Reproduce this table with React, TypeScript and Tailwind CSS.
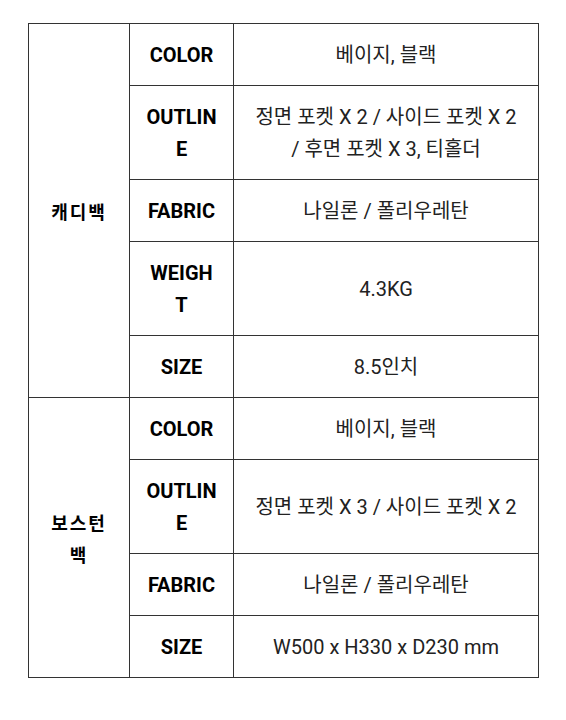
import React from 'react';

type Row = { label: string; value: string };

// labels carry the same breaks the narrow column shows
const groups: { name: string; rows: Row[] }[] = [
  {
    name: '캐디백',
    rows: [
      { label: 'COLOR', value: '베이지, 블랙' },
      { label: 'OUTLIN\nE', value: '정면 포켓 X 2 / 사이드 포켓 X 2 / 후면 포켓 X 3, 티홀더' },
      { label: 'FABRIC', value: '나일론 / 폴리우레탄' },
      { label: 'WEIGH\nT', value: '4.3KG' },
      { label: 'SIZE', value: '8.5인치' },
    ],
  },
  {
    name: '보스턴 백',
    rows: [
      { label: 'COLOR', value: '베이지, 블랙' },
      { label: 'OUTLIN\nE', value: '정면 포켓 X 3 / 사이드 포켓 X 2' },
      { label: 'FABRIC', value: '나일론 / 폴리우레탄' },
      { label: 'SIZE', value: 'W500 x H330 x D230 mm' },
    ],
  },
];

const cell = 'border border-[#333] text-center align-middle py-[14.5px] leading-[32px]';

export default function App() {
  return (
    <div
      className="bg-white min-h-[720px] pt-[23px] pl-[28px] text-[20px] text-[#222]"
      style={{ fontFamily: 'Roboto, "Noto Sans CJK KR", sans-serif' }}
    >
      <table className="border-collapse w-[510px] table-fixed">
        <colgroup>
          <col className="w-[101px]" />
          <col className="w-[104px]" />
          <col className="w-[305px]" />
        </colgroup>
        <tbody>
          {groups.map((g) =>
            g.rows.map((r, i) => (
              <tr key={g.name + r.label}>
                {i === 0 && (
                  <td
                    rowSpan={g.rows.length}
                    className={`${cell} px-[14px] text-[18px] font-bold text-black tracking-[2px]`}
                    style={{ fontFamily: '"Noto Sans CJK KR", sans-serif' }}
                  >
                    {g.name}
                  </td>
                )}
                <td className={`${cell} px-[14px] font-bold text-black whitespace-pre-line`}>{r.label}</td>
                <td className={`${cell} px-[20px]`}>{r.value}</td>
              </tr>
            ))
          )}
        </tbody>
      </table>
    </div>
  );
}
